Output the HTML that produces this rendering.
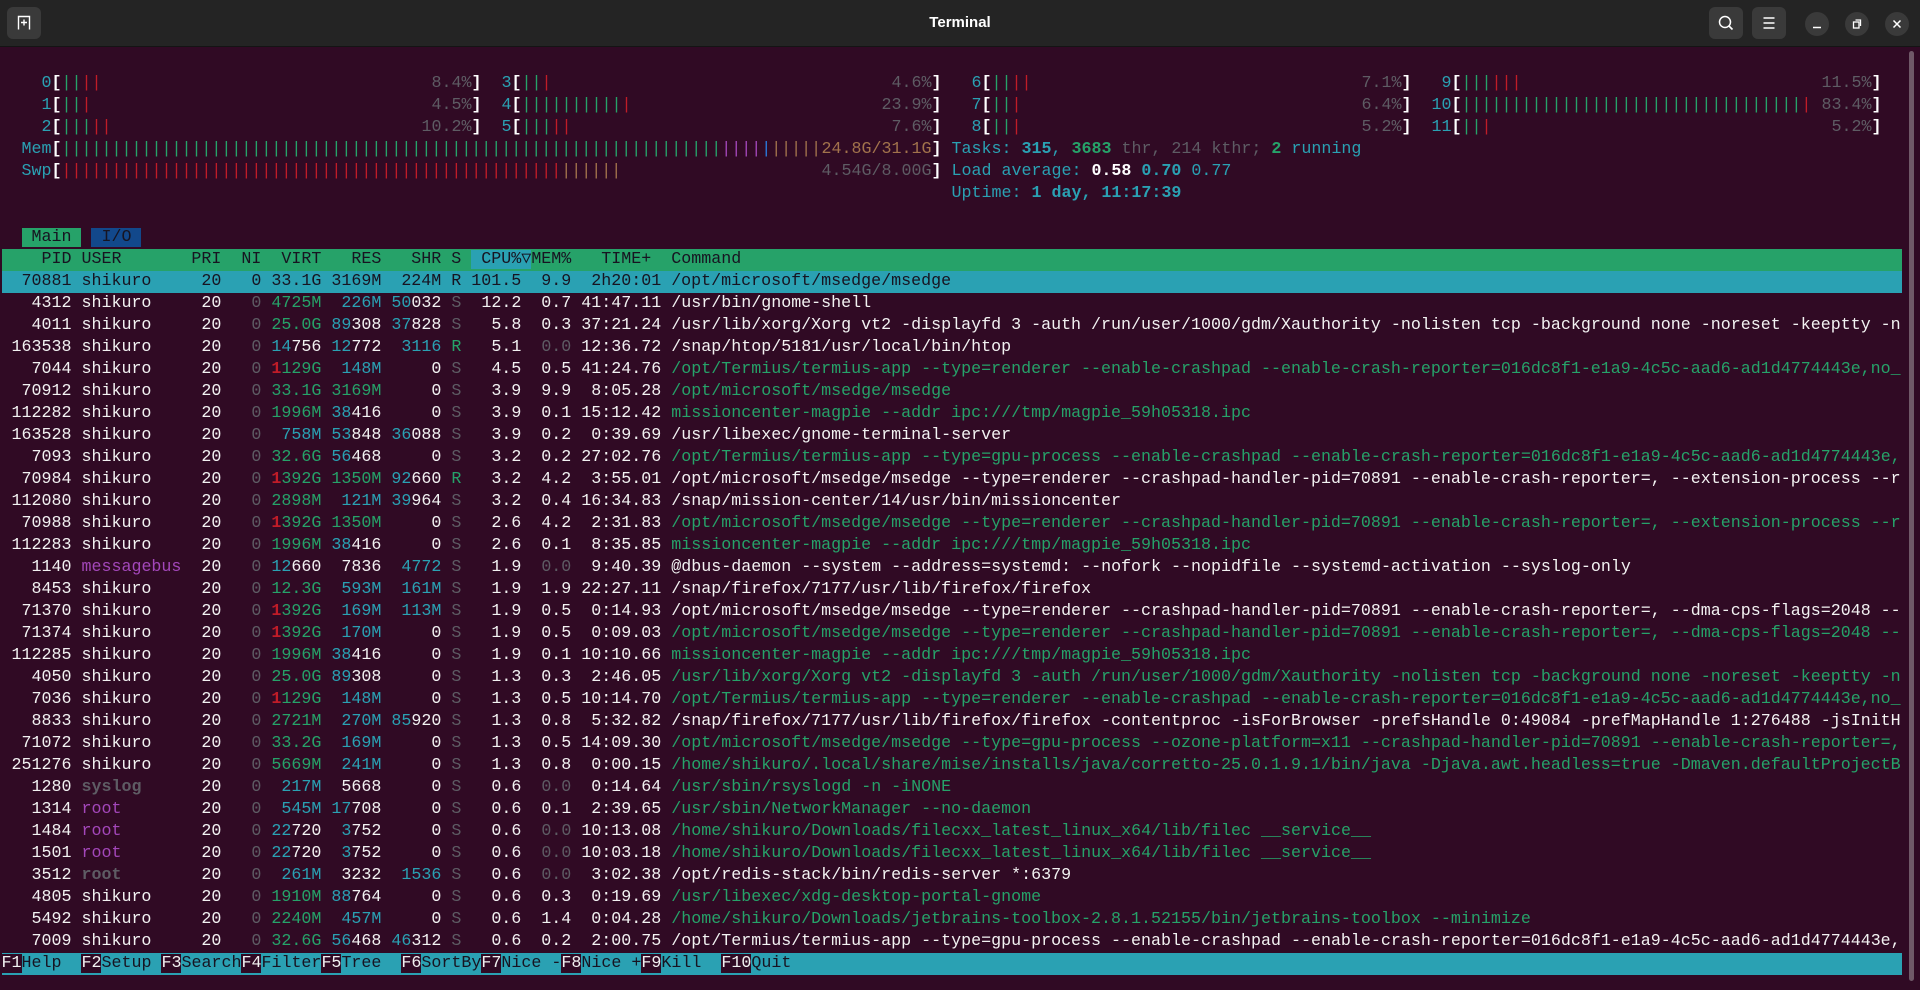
<!DOCTYPE html>
<html><head><meta charset="utf-8">
<style>
html,body{margin:0;padding:0;width:1920px;height:990px;overflow:hidden;background:#300a24;}
#tb{position:absolute;left:0;top:0;width:1920px;height:46px;background:#242424;border-bottom:1px solid #141414;}
#tb .t{position:absolute;left:0;width:1920px;top:0;text-align:center;color:#fff;font:bold 15px "Liberation Sans",sans-serif;line-height:46px;}
.btn{position:absolute;top:7px;width:34px;height:32px;background:#3a3a3a;border-radius:6px;}
.cir{position:absolute;top:12px;width:24px;height:24px;background:#3a3a3a;border-radius:50%;}
#term{position:absolute;left:1.5px;top:50.5px;width:1900px;height:938px;font-family:"Liberation Mono","DejaVu Sans Mono",monospace;font-size:16.67px;color:#f2f2f2;}
.L{position:absolute;left:0;width:1900px;height:22px;line-height:22px;white-space:pre;overflow:hidden;}
.a{position:absolute;top:0;white-space:pre;}
.g{color:#26a269}.c{color:#2aa1b3}.r{color:#c01c28}.R{color:#c01c28;font-weight:bold}.m{color:#a347ba}.b{color:#2a7bde}.y{color:#a2734c}.k{color:#5e5c64}.w{color:#fff;font-weight:bold}.bc{color:#2aa1b3;font-weight:bold}.bg{color:#26a269;font-weight:bold}.kb{color:#5e5c64;font-weight:bold}
.sel{background:#2aa1b3;color:#171421;}
.hdr{background:#26a269;color:#171421;}
.hc{background:#2aa1b3;}
.fk{background:#2aa1b3;color:#171421;}
#sb{position:absolute;left:1909px;top:51px;width:5px;height:930px;background:#8a7a86;border-radius:3px;opacity:.7}
</style></head><body>
<div id="tb">
 <div class="btn" style="left:7px;"><svg width="34" height="32" viewBox="0 0 34 32"><path d="M11.5 22.5V9.5h11v13M17 12.5v6M14 15.5h6" stroke="#fff" stroke-width="1.4" fill="none"/></svg></div>
 <div class="t">Terminal</div>
 <div class="btn" style="left:1709px;"><svg width="34" height="32" viewBox="0 0 34 32"><circle cx="16" cy="15" r="5.5" stroke="#fff" stroke-width="1.5" fill="none"/><path d="M20 19l3.5 3.5" stroke="#fff" stroke-width="1.6"/></svg></div>
 <div class="btn" style="left:1752px;"><svg width="34" height="32" viewBox="0 0 34 32"><path d="M11.5 11h11M11.5 16h11M11.5 21h11" stroke="#fff" stroke-width="1.4"/></svg></div>
 <div class="cir" style="left:1805px;"><svg width="24" height="24"><path d="M8 15.5h8" stroke="#fff" stroke-width="1.5"/></svg></div>
 <div class="cir" style="left:1845px;"><svg width="24" height="24"><rect x="8.5" y="10" width="5.5" height="6" stroke="#fff" stroke-width="1.3" fill="none"/><path d="M10.5 8h5v6" stroke="#fff" stroke-width="1.3" fill="none"/></svg></div>
 <div class="cir" style="left:1885px;"><svg width="24" height="24"><path d="M8.5 8.5l7 7M15.5 8.5l-7 7" stroke="#fff" stroke-width="1.5"/></svg></div>
</div>
<div id="sb"></div>
<div id="term">
<div class="L" style="top:22px">
<span class="a" style="left:0"><span class="c">    0</span><span class="w">[</span><span class="g">||</span><span class="r">||</span></span>
<span class="a" style="left:430px"><span class="k">8.4%</span><span class="w">]</span></span>
<span class="a" style="left:500px"><span class="c">3</span><span class="w">[</span><span class="g">||</span><span class="r">|</span></span>
<span class="a" style="left:890px"><span class="k">4.6%</span><span class="w">]</span></span>
<span class="a" style="left:970px"><span class="c">6</span><span class="w">[</span><span class="g">||</span><span class="r">||</span></span>
<span class="a" style="left:1360px"><span class="k">7.1%</span><span class="w">]</span></span>
<span class="a" style="left:1440px"><span class="c">9</span><span class="w">[</span><span class="g">|||</span><span class="r">|||</span></span>
<span class="a" style="left:1820px"><span class="k">11.5%</span><span class="w">]</span></span>
</div>
<div class="L" style="top:44px">
<span class="a" style="left:0"><span class="c">    1</span><span class="w">[</span><span class="g">||</span><span class="r">|</span></span>
<span class="a" style="left:430px"><span class="k">4.5%</span><span class="w">]</span></span>
<span class="a" style="left:500px"><span class="c">4</span><span class="w">[</span><span class="g">||||||||||</span><span class="r">|</span></span>
<span class="a" style="left:880px"><span class="k">23.9%</span><span class="w">]</span></span>
<span class="a" style="left:970px"><span class="c">7</span><span class="w">[</span><span class="g">||</span><span class="r">|</span></span>
<span class="a" style="left:1360px"><span class="k">6.4%</span><span class="w">]</span></span>
<span class="a" style="left:1430px"><span class="c">10</span><span class="w">[</span><span class="g">||||||||||||||||||||||||||||||||||</span><span class="r">|</span></span>
<span class="a" style="left:1820px"><span class="k">83.4%</span><span class="w">]</span></span>
</div>
<div class="L" style="top:66px">
<span class="a" style="left:0"><span class="c">    2</span><span class="w">[</span><span class="g">|||</span><span class="r">||</span></span>
<span class="a" style="left:420px"><span class="k">10.2%</span><span class="w">]</span></span>
<span class="a" style="left:500px"><span class="c">5</span><span class="w">[</span><span class="g">|||</span><span class="r">||</span></span>
<span class="a" style="left:890px"><span class="k">7.6%</span><span class="w">]</span></span>
<span class="a" style="left:970px"><span class="c">8</span><span class="w">[</span><span class="g">||</span><span class="r">|</span></span>
<span class="a" style="left:1360px"><span class="k">5.2%</span><span class="w">]</span></span>
<span class="a" style="left:1430px"><span class="c">11</span><span class="w">[</span><span class="g">||</span><span class="r">|</span></span>
<span class="a" style="left:1830px"><span class="k">5.2%</span><span class="w">]</span></span>
</div>
<div class="L" style="top:88px">
<span class="a" style="left:20px"><span class="c">Mem</span><span class="w">[</span><span class="g">||||||||||||||||||||||||||||||||||||||||||||||||||||||||||||||||||</span><span class="m">||||</span><span class="b">|</span><span class="y">|||||</span></span>
<span class="a" style="left:820px"><span class="y">24.8G/31.1G</span><span class="w">]</span></span>
<span class="a" style="left:950px"><span class="c">Tasks: </span><span class="bc">315</span><span class="c">, </span><span class="bg">3683</span><span class="k"> thr, 214 kthr; </span><span class="bg">2</span><span class="c"> running</span></span>
</div>
<div class="L" style="top:110px">
<span class="a" style="left:20px"><span class="c">Swp</span><span class="w">[</span><span class="r">||||||||||||||||||||||||||||||||||||||||||||||||||</span><span class="y">||||||</span></span>
<span class="a" style="left:820px"><span class="k">4.54G/8.00G</span><span class="w">]</span></span>
<span class="a" style="left:950px"><span class="c">Load average: </span><span class="w">0.58 </span><span class="bc">0.70 </span><span class="c">0.77</span></span>
</div>
<div class="L" style="top:132px">
<span class="a" style="left:950px"><span class="c">Uptime: </span><span class="bc">1 day, 11:17:39</span></span>
</div>
<div class="L" style="top:176px">  <span style="background:#26a269;color:#171421"> Main </span> <span style="background:#12488b;color:#171421"> I/O </span></div>
<div class="L hdr" style="top:198px">    PID USER       PRI  NI  VIRT   RES   SHR S <span class="hc"> CPU%▽</span>MEM%   TIME+  Command</div>
<div class="L sel" style="top:220px">  70881 shikuro     20   0 33.1G 3169M  224M R 101.5  9.9  2h20:01 /opt/microsoft/msedge/msedge</div>
<div class="L" style="top:242px">   4312 shikuro     20   <span class="k">0</span> <span class="g">4725M</span>  <span class="c">226M</span> <span class="c">50</span>032 <span class="k">S</span>  12.2  0.7 41:47.11 /usr/bin/gnome-shell</div>
<div class="L" style="top:264px">   4011 shikuro     20   <span class="k">0</span> <span class="g">25.0G</span> <span class="c">89</span>308 <span class="c">37</span>828 <span class="k">S</span>   5.8  0.3 37:21.24 /usr/lib/xorg/Xorg vt2 -displayfd 3 -auth /run/user/1000/gdm/Xauthority -nolisten tcp -background none -noreset -keeptty -n</div>
<div class="L" style="top:286px"> 163538 shikuro     20   <span class="k">0</span> <span class="c">14</span>756 <span class="c">12</span>772  <span class="c">3116</span> <span class="g">R</span>   5.1  <span class="k">0.0</span> 12:36.72 /snap/htop/5181/usr/local/bin/htop</div>
<div class="L" style="top:308px">   7044 shikuro     20   <span class="k">0</span> <span class="R">1</span><span class="g">129G</span>  <span class="c">148M</span>     0 <span class="k">S</span>   4.5  0.5 41:24.76 <span class="g">/opt/Termius/termius-app --type=renderer --enable-crashpad --enable-crash-reporter=016dc8f1-e1a9-4c5c-aad6-ad1d4774443e,no_</span></div>
<div class="L" style="top:330px">  70912 shikuro     20   <span class="k">0</span> <span class="g">33.1G</span> <span class="g">3169M</span>     0 <span class="k">S</span>   3.9  9.9  8:05.28 <span class="g">/opt/microsoft/msedge/msedge</span></div>
<div class="L" style="top:352px"> 112282 shikuro     20   <span class="k">0</span> <span class="g">1996M</span> <span class="c">38</span>416     0 <span class="k">S</span>   3.9  0.1 15:12.42 <span class="g">missioncenter-magpie --addr ipc:///tmp/magpie_59h05318.ipc</span></div>
<div class="L" style="top:374px"> 163528 shikuro     20   <span class="k">0</span>  <span class="c">758M</span> <span class="c">53</span>848 <span class="c">36</span>088 <span class="k">S</span>   3.9  0.2  0:39.69 /usr/libexec/gnome-terminal-server</div>
<div class="L" style="top:396px">   7093 shikuro     20   <span class="k">0</span> <span class="g">32.6G</span> <span class="c">56</span>468     0 <span class="k">S</span>   3.2  0.2 27:02.76 <span class="g">/opt/Termius/termius-app --type=gpu-process --enable-crashpad --enable-crash-reporter=016dc8f1-e1a9-4c5c-aad6-ad1d4774443e,</span></div>
<div class="L" style="top:418px">  70984 shikuro     20   <span class="k">0</span> <span class="R">1</span><span class="g">392G</span> <span class="g">1350M</span> <span class="c">92</span>660 <span class="g">R</span>   3.2  4.2  3:55.01 /opt/microsoft/msedge/msedge --type=renderer --crashpad-handler-pid=70891 --enable-crash-reporter=, --extension-process --r</div>
<div class="L" style="top:440px"> 112080 shikuro     20   <span class="k">0</span> <span class="g">2898M</span>  <span class="c">121M</span> <span class="c">39</span>964 <span class="k">S</span>   3.2  0.4 16:34.83 /snap/mission-center/14/usr/bin/missioncenter</div>
<div class="L" style="top:462px">  70988 shikuro     20   <span class="k">0</span> <span class="R">1</span><span class="g">392G</span> <span class="g">1350M</span>     0 <span class="k">S</span>   2.6  4.2  2:31.83 <span class="g">/opt/microsoft/msedge/msedge --type=renderer --crashpad-handler-pid=70891 --enable-crash-reporter=, --extension-process --r</span></div>
<div class="L" style="top:484px"> 112283 shikuro     20   <span class="k">0</span> <span class="g">1996M</span> <span class="c">38</span>416     0 <span class="k">S</span>   2.6  0.1  8:35.85 <span class="g">missioncenter-magpie --addr ipc:///tmp/magpie_59h05318.ipc</span></div>
<div class="L" style="top:506px">   1140 <span class="m">messagebus</span>  20   <span class="k">0</span> <span class="c">12</span>660  7836  <span class="c">4772</span> <span class="k">S</span>   1.9  <span class="k">0.0</span>  9:40.39 @dbus-daemon --system --address=systemd: --nofork --nopidfile --systemd-activation --syslog-only</div>
<div class="L" style="top:528px">   8453 shikuro     20   <span class="k">0</span> <span class="g">12.3G</span>  <span class="c">593M</span>  <span class="c">161M</span> <span class="k">S</span>   1.9  1.9 22:27.11 /snap/firefox/7177/usr/lib/firefox/firefox</div>
<div class="L" style="top:550px">  71370 shikuro     20   <span class="k">0</span> <span class="R">1</span><span class="g">392G</span>  <span class="c">169M</span>  <span class="c">113M</span> <span class="k">S</span>   1.9  0.5  0:14.93 /opt/microsoft/msedge/msedge --type=renderer --crashpad-handler-pid=70891 --enable-crash-reporter=, --dma-cps-flags=2048 --</div>
<div class="L" style="top:572px">  71374 shikuro     20   <span class="k">0</span> <span class="R">1</span><span class="g">392G</span>  <span class="c">170M</span>     0 <span class="k">S</span>   1.9  0.5  0:09.03 <span class="g">/opt/microsoft/msedge/msedge --type=renderer --crashpad-handler-pid=70891 --enable-crash-reporter=, --dma-cps-flags=2048 --</span></div>
<div class="L" style="top:594px"> 112285 shikuro     20   <span class="k">0</span> <span class="g">1996M</span> <span class="c">38</span>416     0 <span class="k">S</span>   1.9  0.1 10:10.66 <span class="g">missioncenter-magpie --addr ipc:///tmp/magpie_59h05318.ipc</span></div>
<div class="L" style="top:616px">   4050 shikuro     20   <span class="k">0</span> <span class="g">25.0G</span> <span class="c">89</span>308     0 <span class="k">S</span>   1.3  0.3  2:46.05 <span class="g">/usr/lib/xorg/Xorg vt2 -displayfd 3 -auth /run/user/1000/gdm/Xauthority -nolisten tcp -background none -noreset -keeptty -n</span></div>
<div class="L" style="top:638px">   7036 shikuro     20   <span class="k">0</span> <span class="R">1</span><span class="g">129G</span>  <span class="c">148M</span>     0 <span class="k">S</span>   1.3  0.5 10:14.70 <span class="g">/opt/Termius/termius-app --type=renderer --enable-crashpad --enable-crash-reporter=016dc8f1-e1a9-4c5c-aad6-ad1d4774443e,no_</span></div>
<div class="L" style="top:660px">   8833 shikuro     20   <span class="k">0</span> <span class="g">2721M</span>  <span class="c">270M</span> <span class="c">85</span>920 <span class="k">S</span>   1.3  0.8  5:32.82 /snap/firefox/7177/usr/lib/firefox/firefox -contentproc -isForBrowser -prefsHandle 0:49084 -prefMapHandle 1:276488 -jsInitH</div>
<div class="L" style="top:682px">  71072 shikuro     20   <span class="k">0</span> <span class="g">33.2G</span>  <span class="c">169M</span>     0 <span class="k">S</span>   1.3  0.5 14:09.30 <span class="g">/opt/microsoft/msedge/msedge --type=gpu-process --ozone-platform=x11 --crashpad-handler-pid=70891 --enable-crash-reporter=,</span></div>
<div class="L" style="top:704px"> 251276 shikuro     20   <span class="k">0</span> <span class="g">5669M</span>  <span class="c">241M</span>     0 <span class="k">S</span>   1.3  0.8  0:00.15 <span class="g">/home/shikuro/.local/share/mise/installs/java/corretto-25.0.1.9.1/bin/java -Djava.awt.headless=true -Dmaven.defaultProjectB</span></div>
<div class="L" style="top:726px">   1280 <span class="kb">syslog</span>      20   <span class="k">0</span>  <span class="c">217M</span>  5668     0 <span class="k">S</span>   0.6  <span class="k">0.0</span>  0:14.64 <span class="g">/usr/sbin/rsyslogd -n -iNONE</span></div>
<div class="L" style="top:748px">   1314 <span class="m">root</span>        20   <span class="k">0</span>  <span class="c">545M</span> <span class="c">17</span>708     0 <span class="k">S</span>   0.6  0.1  2:39.65 <span class="g">/usr/sbin/NetworkManager --no-daemon</span></div>
<div class="L" style="top:770px">   1484 <span class="m">root</span>        20   <span class="k">0</span> <span class="c">22</span>720  <span class="c">3</span>752     0 <span class="k">S</span>   0.6  <span class="k">0.0</span> 10:13.08 <span class="g">/home/shikuro/Downloads/filecxx_latest_linux_x64/lib/filec __service__</span></div>
<div class="L" style="top:792px">   1501 <span class="m">root</span>        20   <span class="k">0</span> <span class="c">22</span>720  <span class="c">3</span>752     0 <span class="k">S</span>   0.6  <span class="k">0.0</span> 10:03.18 <span class="g">/home/shikuro/Downloads/filecxx_latest_linux_x64/lib/filec __service__</span></div>
<div class="L" style="top:814px">   3512 <span class="kb">root</span>        20   <span class="k">0</span>  <span class="c">261M</span>  3232  <span class="c">1536</span> <span class="k">S</span>   0.6  <span class="k">0.0</span>  3:02.38 /opt/redis-stack/bin/redis-server *:6379</div>
<div class="L" style="top:836px">   4805 shikuro     20   <span class="k">0</span> <span class="g">1910M</span> <span class="c">88</span>764     0 <span class="k">S</span>   0.6  0.3  0:19.69 <span class="g">/usr/libexec/xdg-desktop-portal-gnome</span></div>
<div class="L" style="top:858px">   5492 shikuro     20   <span class="k">0</span> <span class="g">2240M</span>  <span class="c">457M</span>     0 <span class="k">S</span>   0.6  1.4  0:04.28 <span class="g">/home/shikuro/Downloads/jetbrains-toolbox-2.8.1.52155/bin/jetbrains-toolbox --minimize</span></div>
<div class="L" style="top:880px">   7009 shikuro     20   <span class="k">0</span> <span class="g">32.6G</span> <span class="c">56</span>468 <span class="c">46</span>312 <span class="k">S</span>   0.6  0.2  2:00.75 /opt/Termius/termius-app --type=gpu-process --enable-crashpad --enable-crash-reporter=016dc8f1-e1a9-4c5c-aad6-ad1d4774443e,</div>
<div class="L fk" style="top:902px"><span style="background:#300a24;color:#f2f2f2">F1</span>Help  <span style="background:#300a24;color:#f2f2f2">F2</span>Setup <span style="background:#300a24;color:#f2f2f2">F3</span>Search<span style="background:#300a24;color:#f2f2f2">F4</span>Filter<span style="background:#300a24;color:#f2f2f2">F5</span>Tree  <span style="background:#300a24;color:#f2f2f2">F6</span>SortBy<span style="background:#300a24;color:#f2f2f2">F7</span>Nice -<span style="background:#300a24;color:#f2f2f2">F8</span>Nice +<span style="background:#300a24;color:#f2f2f2">F9</span>Kill  <span style="background:#300a24;color:#f2f2f2">F10</span>Quit</div>
</div>
</body></html>
